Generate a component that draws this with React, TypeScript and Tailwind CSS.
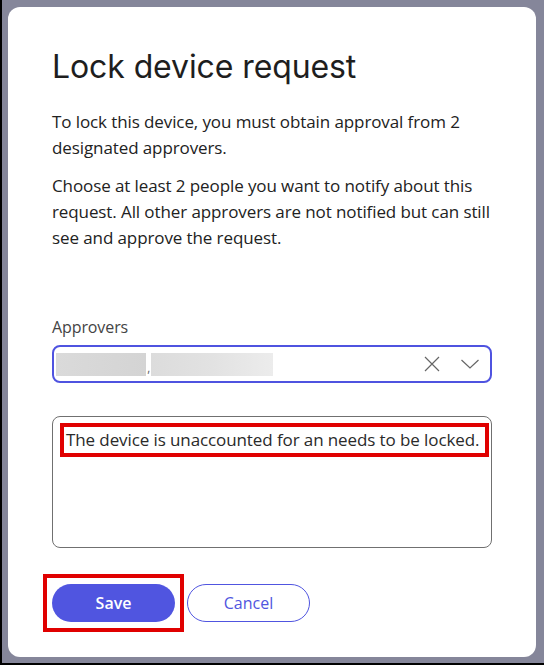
import React from "react";

const body = { fontFamily: "'Open Sans', Lato, sans-serif" };

export default function App() {
  return (
    <div className="w-[544px] h-[665px] bg-[#85869a] border-l-2 border-b-2 border-black box-border pl-[6px] pt-[7px] pr-[8px] pb-[6px] flex" style={{ fontFamily: "Inter, 'Liberation Sans', sans-serif" }}>
      <div className="flex-1 bg-white rounded-[12px] pl-[44px] pr-[44px] pt-[40px] flex flex-col text-[#222]">
        <h1 className="text-[32px] leading-[40px] font-normal tracking-[-0.1px] text-[#1e1e1e]">Lock device request</h1>
        <p className="mt-[22px] text-[17px] leading-[26px] tracking-[-0.1px]" style={body}>
          To lock this device, you must obtain approval from 2 designated approvers.
        </p>
        <p className="mt-[12px] text-[17px] leading-[26px] tracking-[-0.1px]" style={body}>
          Choose at least 2 people you want to notify about this request. All other approvers are not notified but can still see and approve the request.
        </p>
        <label className="mt-[66px] text-[16px] leading-[20px] text-[#444] tracking-[-0.1px]" style={body}>Approvers</label>
        <div className="mt-[8px] h-[38px] border-2 border-[#4f53e0] rounded-[8px] flex items-center pl-[2px] pr-[10px]">
          <div className="w-[90px] h-[23px] bg-gradient-to-r from-[#dadada] to-[#d4d4d4]" />
          <span className="text-[12px] text-[#666] leading-none mt-[8px] px-[1px]">,</span>
          <div className="w-[122px] h-[23px] bg-gradient-to-r from-[#dcdcdc] via-[#e2e2e2] to-[#ececec]" />
          <div className="flex-1" />
          <svg width="18" height="18" viewBox="0 0 18 18" className="mr-[19px]">
            <path d="M2 2 L16 16 M16 2 L2 16" stroke="#666" strokeWidth="1.2" fill="none" />
          </svg>
          <svg width="20" height="12" viewBox="0 0 20 12">
            <path d="M1.5 2 L10 10 L18.5 2" stroke="#666" strokeWidth="1.2" fill="none" />
          </svg>
        </div>
        <div className="mt-[33px] h-[132px] border border-[#707070] rounded-[8px] pt-[6px] pl-[7px]">
          <div className="inline-block border-[4px] border-[#e00000] pl-[2px] pr-[6px] py-[2px] text-[17px] leading-[22px] text-[#2a2a2a] tracking-[-0.1px]" style={body}>
            The device is unaccounted for an needs to be locked.
          </div>
        </div>
        <div className="mt-[26px] flex items-center -ml-[9px]">
          <div className="border-[4px] border-[#e00000] px-[5px] py-[6px]">
            <button className="w-[123px] h-[38px] rounded-full bg-[#5055e0] text-white text-[16px] font-semibold block" style={body}>Save</button>
          </div>
          <button className="ml-[3px] w-[123px] h-[38px] rounded-full border border-[#5055e0] text-[#5055e0] text-[16px]" style={body}>Cancel</button>
        </div>
      </div>
    </div>
  );
}
